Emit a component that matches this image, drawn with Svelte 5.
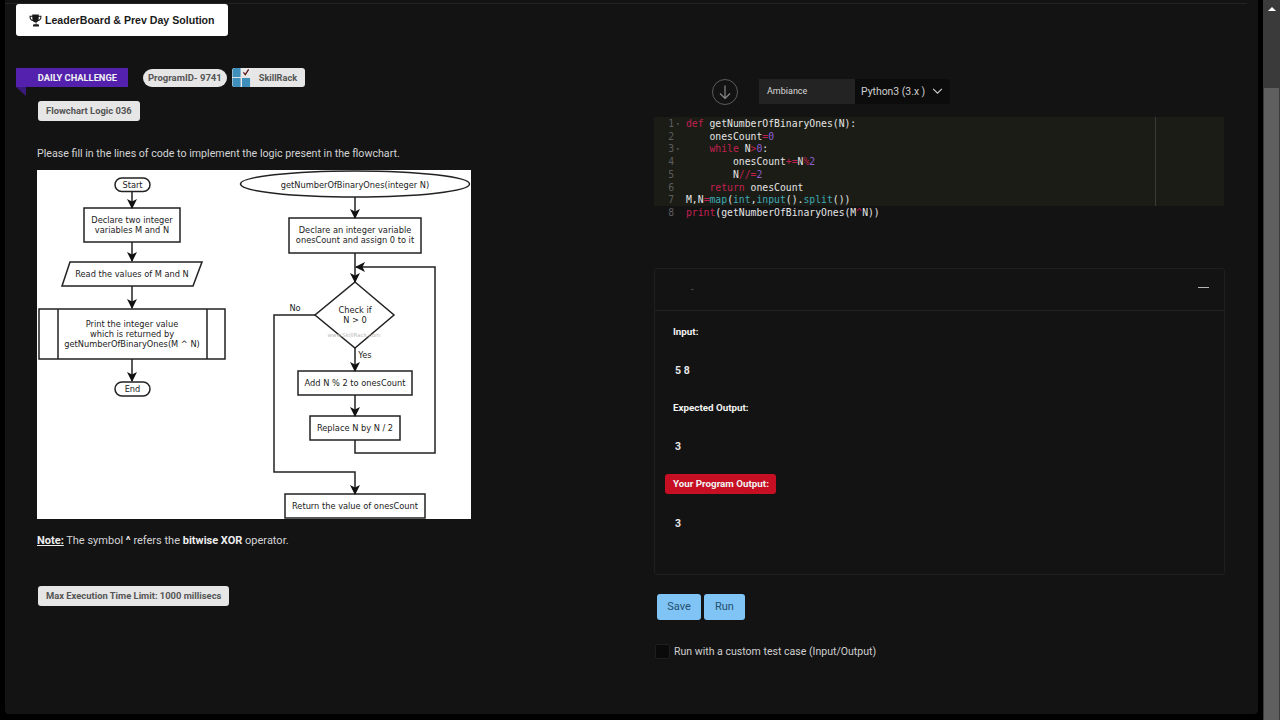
<script>
  const boxes = [
    { x: 84, y: 208, w: 96, h: 34 },
    { x: 39, y: 309, w: 186, h: 50 },
    { x: 289, y: 218, w: 132, h: 35 },
    { x: 298, y: 371, w: 114, h: 24 },
    { x: 310, y: 416, w: 90, h: 24 },
    { x: 285, y: 494, w: 140, h: 24 }
  ];

  const arrows = [
    '132,192 132,208',
    '132,242 132,261',
    '132,286 132,308',
    '132,359 132,381',
    '355,197 355,218',
    '355,253 355,282',
    '355,348 355,371',
    '355,395 355,416',
    '315,315 274,315 274,472 355,472 355,494',
    '355,440 355,453 435,453 435,267 356,267'
  ];

  const labels = [
    { x: 132.5, y: 185, t: 'Start' },
    { x: 132, y: 220, t: 'Declare two integer' },
    { x: 132, y: 230, t: 'variables M and N' },
    { x: 132, y: 274, t: 'Read the values of M and N' },
    { x: 132, y: 324, t: 'Print the integer value' },
    { x: 132, y: 334, t: 'which is returned by' },
    { x: 132, y: 344.5, t: 'getNumberOfBinaryOnes(M ^ N)' },
    { x: 132.5, y: 389, t: 'End' },
    { x: 355, y: 185, t: 'getNumberOfBinaryOnes(integer N)' },
    { x: 355, y: 230, t: 'Declare an integer variable' },
    { x: 355, y: 240.5, t: 'onesCount and assign 0 to it' },
    { x: 355, y: 310, t: 'Check if' },
    { x: 355, y: 320, t: 'N > 0' },
    { x: 295, y: 308.5, t: 'No' },
    { x: 365, y: 355.5, t: 'Yes' },
    { x: 355, y: 383.5, t: 'Add N % 2 to onesCount' },
    { x: 355, y: 428.5, t: 'Replace N by N / 2' },
    { x: 355, y: 506.5, t: 'Return the value of onesCount' }
  ];

  // k = keyword, n = number, f = builtin, o = operator, plain text otherwise
  const code = [
    [['k', 'def'], ['', ' getNumberOfBinaryOnes(N):']],
    [['', '    onesCount'], ['o', '='], ['n', '0']],
    [['k', '    while'], ['', ' N'], ['o', '>'], ['n', '0'], ['', ':']],
    [['', '        onesCount'], ['o', '+='], ['', 'N'], ['o', '%'], ['n', '2']],
    [['', '        N'], ['o', '//='], ['n', '2']],
    [['k', '    return'], ['', ' onesCount']],
    [['', 'M,N'], ['o', '='], ['f', 'map'], ['', '('], ['f', 'int'], ['', ','], ['f', 'input'], ['', '().'], ['f', 'split'], ['', '())']],
    [['k', 'print'], ['', '(getNumberOfBinaryOnes(M'], ['o', '^'], ['', 'N))']]
  ];

  const results = [
    { label: 'Input:', value: '5 8' },
    { label: 'Expected Output:', value: '3' },
    { label: 'Your Program Output:', value: '3', fail: true }
  ];
</script>

<div class="window">
  <main class="page">
    <div class="top">
      <button class="leader">
        <svg class="trophy" viewBox="0 0 24 24" width="13" height="13">
          <path d="M6 1h12v2h5v3c0 4-3 6.500-6.200 7-.8 1.500-2 2.500-3.300 2.900V19h3c1 0 2 1 2 2.500V23H7.500v-1.500C7.500 20 8.500 19 9.500 19h3v-3.100C11 15.500 8 15 7.200 13 4 12.500 1 10 1 6V3h5V1zM3 5v1c0 2.500 1.600 4.200 3.600 4.800C6.200 9 6 7 6 5H3zm18 0h-3c0 2-.2 4-.6 5.800C19.400 10.200 21 8.500 21 6V5z" />
        </svg>
        LeaderBoard &amp; Prev Day Solution
      </button>
    </div>

    <div class="columns">
      <section class="problem">
        <div class="tags">
          <div class="ribbon">DAILY CHALLENGE</div>
          <span class="pill">ProgramID- 9741</span>
          <span class="brand">
            <svg viewBox="0 0 20 20" width="20" height="19">
              <rect width="20" height="20" fill="#e8e8e8" />
              <rect x="0" y="0" width="8.500" height="9.500" fill="#3f8fbd" />
              <rect x="0" y="10.500" width="8.500" height="9.500" fill="#3f8fbd" />
              <rect x="10" y="10.500" width="8.500" height="9.500" fill="#3f8fbd" />
              <path d="M11.500 4.500l2 2.500L17 1.500" fill="none" stroke="#5a1414" stroke-width="1.300" />
            </svg>
            SkillRack
          </span>
        </div>

        <div class="body">
          <div class="chip title">Flowchart Logic 036</div>
          <p class="intro">Please fill in the lines of code to implement the logic present in the flowchart.</p>

          <svg class="flow" viewBox="37 170 434 349" width="434" height="349">
            <defs>
              <marker id="head" viewBox="0 0 10 10" refX="9" refY="5" markerWidth="10" markerHeight="10" markerUnits="userSpaceOnUse" orient="auto">
                <path d="M0 0L10 5L0 10L2.500 5z" fill="#111" />
              </marker>
            </defs>
            <rect x="37" y="170" width="434" height="349" fill="#fff" />
            <g fill="none" stroke="#222" stroke-width="1.500">
              <rect x="115" y="178" width="35" height="13.500" rx="6.700" />
              <rect x="115" y="382" width="35" height="14" rx="7" />
              <ellipse cx="355" cy="184" rx="114.500" ry="13" />
              <polygon points="70,262 202,262 193,286 62,286" />
              <polygon points="355,282 394,315 355,348 315,315" />
              <path d="M58 309V359M207 309V359" />
              {#each boxes as b}
                <rect x={b.x} y={b.y} width={b.w} height={b.h} />
              {/each}
              {#each arrows as points}
                <polyline {points} marker-end="url(#head)" />
              {/each}
            </g>
            <g class="flow-text">
              {#each labels as l}
                <text x={l.x} y={l.y}>{l.t}</text>
              {/each}
            </g>
            <text class="mark" x="354" y="337">www.SkillRack.com</text>
          </svg>

          <p class="note"><b class="under">Note:</b> The symbol <b>^</b> refers the <b>bitwise XOR</b> operator.</p>
          <div class="chip limit">Max Execution Time Limit: 1000 millisecs</div>
        </div>
      </section>

      <section class="solution">
        <div class="toolbar">
          <span class="down">
            <svg viewBox="0 0 26 26" width="26" height="26">
              <circle cx="13" cy="13" r="12.500" fill="none" stroke="#5c5c5c" />
              <path d="M13 6.500V19M8 14.500L13 19.500L18 14.500" fill="none" stroke="#8a8a8a" stroke-width="1.200" />
            </svg>
          </span>
          <div class="theme">Ambiance</div>
          <div class="lang">
            Python3 (3.x )
            <svg viewBox="0 0 12 8" width="11" height="7">
              <path d="M1 1l5 5 5-5" fill="none" stroke="#ccc" stroke-width="1.300" />
            </svg>
          </div>
        </div>

        <div class="editor">
          <div class="margin-line"></div>
          {#each code as line, i}
            <div class="line">
              <span class="num">{i + 1}</span>
              <span class="fold">{i === 0 || i === 2 ? '▾' : ''}</span>
              <span class="src">{#each line as [kind, text]}<span class={kind}>{text}</span>{/each}</span>
            </div>
          {/each}
        </div>

        <div class="card">
          <header class="card-head">
            <span class="dash">-</span>
            <span class="minus"></span>
          </header>
          <div class="card-body">
            {#each results as r}
              <div class="result">
                <span class="label" class:fail={r.fail}>{r.label}</span>
                <span class="value">{r.value}</span>
              </div>
            {/each}
          </div>
        </div>

        <div class="actions">
          <button class="run">Save</button>
          <button class="run">Run</button>
        </div>

        <label class="custom">
          <span class="check"></span>
          Run with a custom test case (Input/Output)
        </label>
      </section>
    </div>
  </main>

  <aside class="scrollbar">
    <span class="up"></span>
    <span class="thumb"></span>
  </aside>
</div>

<style>
  :global(body) {
    background: #000;
    overflow: hidden;
  }

  .window {
    display: flex;
    height: 720px;
    font-family: Roboto, "Open Sans", sans-serif;
    color: #d4d4d4;
  }

  .page {
    width: 1253px;
    height: 714px;
    margin-left: 5px;
    background: #131314;
    border-radius: 0 0 4px 4px;
    overflow: hidden;
  }

  .top {
    position: relative;
    height: 68px;
    padding: 4px 0 0 11px;
    box-sizing: border-box;
  }

  .top::before {
    content: '';
    position: absolute;
    left: 0;
    top: 3px;
    width: 1242px;
    height: 1px;
    background: #232324;
  }

  .leader {
    position: relative;
    display: flex;
    align-items: center;
    gap: 3px;
    width: 212px;
    height: 32px;
    padding: 0 0 0 13px;
    border: 0;
    border-radius: 3px;
    background: #fff;
    color: #1a1a1a;
    font: bold 10.600px "Liberation Sans", sans-serif;
    white-space: nowrap;
  }

  .trophy {
    fill: #1a1a1a;
    flex: none;
  }

  .columns {
    display: grid;
    grid-template-columns: 638px 571px;
    padding-left: 11px;
  }

  .tags {
    display: flex;
    align-items: flex-start;
    height: 33px;
  }

  .ribbon {
    position: relative;
    width: 112px;
    height: 19px;
    margin-right: 15px;
    background: #5321ad;
    color: #f2f2f2;
    font-size: 9.300px;
    font-weight: 700;
    line-height: 19px;
    text-align: right;
    padding-right: 11px;
    box-sizing: border-box;
  }

  .ribbon::after {
    content: '';
    position: absolute;
    left: 0;
    top: 19px;
    border-top: 9px solid #3a1a7a;
    border-left: 10px solid transparent;
  }

  .pill {
    height: 18px;
    margin: 1px 5px 0 0;
    padding: 0 5px;
    border-radius: 9px;
    background: #e6e6e6;
    color: #555;
    font-size: 9.500px;
    font-weight: 700;
    line-height: 18px;
  }

  .brand {
    display: flex;
    align-items: center;
    gap: 7px;
    width: 73px;
    height: 19px;
    border-radius: 3px;
    background: #e6e6e6;
    color: #555;
    font-size: 9.200px;
    font-weight: 700;
    overflow: hidden;
  }

  .body {
    padding-left: 21px;
  }

  .chip {
    width: fit-content;
    margin-left: 1px;
    padding: 0 8px;
    height: 20px;
    border-radius: 3px;
    background: #e6e6e6;
    color: #555;
    font-size: 9.400px;
    font-weight: 700;
    line-height: 20px;
  }

  .intro {
    margin: 24px 0 8px;
    height: 17px;
    font-size: 10.650px;
    line-height: 17px;
  }

  .flow {
    display: block;
  }

  .flow-text text {
    font: 8.250px "DejaVu Sans", sans-serif;
    fill: #222;
    text-anchor: middle;
    dominant-baseline: middle;
  }

  .mark {
    font: 5.500px "DejaVu Sans", sans-serif;
    fill: #bbb;
    text-anchor: middle;
  }

  .note {
    margin: 13px 0 36px;
    height: 18px;
    font-size: 11px;
    line-height: 18px;
  }

  .note b {
    color: #ededed;
  }

  .under {
    text-decoration: underline;
  }

  .toolbar {
    display: flex;
    align-items: center;
    height: 25px;
    margin-top: 11px;
  }

  .down {
    display: flex;
    margin-left: 58px;
    margin-right: 21px;
  }

  .theme {
    width: 96px;
    height: 25px;
    padding-left: 8px;
    box-sizing: border-box;
    background: #232323;
    color: #d8d8d8;
    font-size: 9px;
    line-height: 24px;
  }

  .lang {
    display: flex;
    align-items: center;
    gap: 7px;
    width: 95px;
    height: 25px;
    padding-left: 6px;
    box-sizing: border-box;
    background: #0c0c0c;
    color: #cfcfcf;
    font-size: 10.400px;
  }

  .editor {
    position: relative;
    margin-top: 13px;
    padding-top: 1px;
    font: 9.750px/12.700px "DejaVu Sans Mono", monospace;
    color: #e4e4e4;
  }

  .editor::before {
    content: '';
    position: absolute;
    inset: 0 1px auto 0;
    height: 89px;
    background: #1b1c16;
  }

  .margin-line {
    position: absolute;
    left: 501px;
    top: 0;
    width: 1px;
    height: 89px;
    background: #3a3a36;
  }

  .line {
    position: relative;
    display: flex;
    white-space: pre;
  }

  .num {
    width: 20px;
    text-align: right;
    color: #5c5c5c;
  }

  .fold {
    width: 12px;
    font-size: 6px;
    color: #5c5c5c;
    padding-left: 2px;
    box-sizing: border-box;
  }

  .k, .o {
    color: #c2204f;
  }

  .n {
    color: #8a5fd0;
  }

  .f {
    color: #3fa7b5;
  }

  .card {
    margin-top: 48px;
    height: 307px;
    border: 1px solid #1f1f20;
    border-radius: 3px;
    box-sizing: border-box;
  }

  .card-head {
    display: flex;
    align-items: center;
    justify-content: space-between;
    height: 42px;
    padding: 0 15px 0 36px;
    border-bottom: 1px solid #222;
    box-sizing: border-box;
  }

  .dash {
    color: #666;
    font-size: 9px;
  }

  .minus {
    width: 11px;
    height: 1px;
    background: #b5b5b5;
    margin-top: -4px;
  }

  .card-body {
    display: flex;
    flex-direction: column;
    gap: 18.500px;
    padding: 11px 0 0 10px;
  }

  .result {
    display: flex;
    flex-direction: column;
    align-items: flex-start;
    gap: 20px;
  }

  .label {
    height: 20px;
    padding: 0 7px 0 8px;
    border-radius: 3px;
    color: #f2f2f2;
    font-size: 9.800px;
    font-weight: 700;
    line-height: 20px;
  }

  .label.fail {
    background: #c70f23;
    margin-top: -1px;
    margin-bottom: 1px;
  }

  .value {
    height: 18px;
    padding-left: 10px;
    color: #e6e6e6;
    font-size: 10.500px;
    font-weight: 700;
    line-height: 18px;
  }

  .actions {
    display: flex;
    gap: 3px;
    margin: 19px 0 0 3px;
  }

  .run {
    width: 44px;
    height: 26px;
    padding: 0;
    border: 0;
    border-radius: 3px;
    background: #7fc4f5;
    color: #24506f;
    font: 11px Roboto, sans-serif;
  }

  .run:last-child {
    width: 41px;
  }

  .custom {
    display: flex;
    align-items: center;
    gap: 4px;
    margin: 24px 0 0 1px;
    font-size: 10.550px;
    color: #cfcfcf;
  }

  .check {
    width: 15px;
    height: 15px;
    background: #0a0a0a;
    border: 1px solid #1e1e1e;
    border-radius: 2px;
    box-sizing: border-box;
  }

  .scrollbar {
    display: flex;
    flex-direction: column;
    width: 17px;
    height: 720px;
    margin-left: 5px;
    background: #3a3a3a;
  }

  .up {
    width: 0;
    height: 0;
    margin: 7px auto 0;
    border: 4px solid transparent;
    border-top: 0;
    border-bottom: 4px solid #fff;
  }

  .thumb {
    flex: 1;
    margin: 77px 1px 0;
    background: #5f5f5f;
  }
</style>
